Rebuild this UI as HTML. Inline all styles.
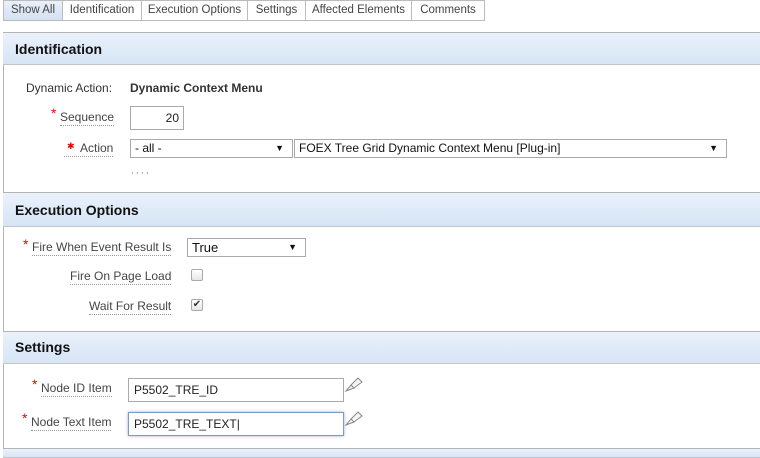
<!DOCTYPE html>
<html><head><style>
*{box-sizing:border-box;margin:0;padding:0}
body{width:760px;height:453px;overflow:hidden;background:#fff;font-family:"Liberation Sans",Arial,sans-serif;font-size:12px;color:#333;position:relative}
.a{position:absolute}
.tab{position:absolute;top:0;height:21px;border:1px solid #bbb;border-left:none;background:#fff;color:#444;font-size:11.5px;line-height:19px;text-align:center}
.hdr{position:absolute;left:3px;width:760px;border-top:1px solid #b5b5b5;border-bottom:1px solid #c5c5c5;background:linear-gradient(#eaf1fb,#d6e5f5);font-weight:bold;font-size:14px;color:#111;padding-left:12px}
.lbl{position:absolute;color:#444;font-size:12px;border-bottom:1px dotted #999;line-height:15px}
.star{position:absolute;color:#e00;font-size:14px}
.inp{position:absolute;border:1px solid #aaa;background:#fff;font-size:12px;color:#222;padding-left:5px}
.sel{position:absolute;border:1px solid #aaa;background:#fff;font-size:12px;color:#111;padding-left:4px;line-height:17px}
.sel:after{content:"▼";position:absolute;right:8px;top:0;font-size:9px}
.cb{position:absolute;width:12px;height:12px;border:1px solid #aaa;border-radius:2px;background:linear-gradient(#fff,#e6e6e6)}
</style></head><body>
<div class="tab" style="left:3px;width:60px;border-left:1px solid #bbb;background:linear-gradient(#e9f0fa,#d3e1f3)">Show All</div>
<div class="tab" style="left:63px;width:79px">Identification</div>
<div class="tab" style="left:142px;width:106px">Execution Options</div>
<div class="tab" style="left:248px;width:58px">Settings</div>
<div class="tab" style="left:306px;width:106px">Affected Elements</div>
<div class="tab" style="left:412px;width:73px">Comments</div>

<div class="a" style="left:3px;top:32px;width:1px;height:421px;background:#b5b5b5"></div>

<div class="hdr" style="top:32px;height:33px;line-height:32px">Identification</div>
<div class="a" style="left:26px;top:81px;color:#333">Dynamic Action:</div>
<div class="a" style="left:130px;top:81px;font-weight:bold;color:#333">Dynamic Context Menu</div>
<span class="star" style="left:51px;top:105px">*</span>
<div class="lbl" style="left:60px;top:110px">Sequence</div>
<div class="inp" style="left:130px;top:106px;width:54px;height:24px;text-align:right;padding-right:4px;line-height:22px">20</div>
<span class="star" style="left:67px;top:141px;font-size:9px">✱</span>
<div class="lbl" style="left:64px;top:141px;padding-left:16px">Action</div>
<div class="sel" style="left:130px;top:139px;width:163px;height:19px">- all -</div>
<div class="sel" style="left:294px;top:139px;width:433px;height:19px">FOEX Tree Grid Dynamic Context Menu [Plug-in]</div>
<div class="a" style="left:131px;top:165px;font-size:9px;color:#888">, , , ,</div>

<div class="hdr" style="top:192px;height:35px;line-height:34px">Execution Options</div>
<span class="star" style="left:23px;top:236px">*</span>
<div class="lbl" style="left:32px;top:240px">Fire When Event Result Is</div>
<div class="sel" style="left:187px;top:238px;width:119px;height:19px;font-size:13px">True</div>
<div class="lbl" style="left:70px;top:269px">Fire On Page Load</div>
<div class="cb" style="left:191px;top:269px"></div>
<div class="lbl" style="left:89px;top:299px">Wait For Result</div>
<div class="cb" style="left:191px;top:299px;font-size:10px;line-height:9px;text-align:center;color:#333">✔</div>

<div class="hdr" style="top:331px;height:33px;line-height:31px">Settings</div>
<span class="star" style="left:32px;top:376px">*</span>
<div class="lbl" style="left:41px;top:381px">Node ID Item</div>
<div class="inp" style="left:128px;top:378px;width:216px;height:24px;line-height:22px">P5502_TRE_ID</div>
<span class="star" style="left:22px;top:410px">*</span>
<div class="lbl" style="left:31px;top:415px">Node Text Item</div>
<div class="inp" style="left:128px;top:412px;width:216px;height:24px;line-height:22px;border-color:#7a9cc7;box-shadow:0 0 3px #aac">P5502_TRE_TEXT|</div>
<svg class="a" style="left:344px;top:376px" width="20" height="20" viewBox="0 0 20 20"><path d="M2 15 L7 9 L10 12 Z M7 9 L14 2 L18 6 L10 12" fill="#f4f4f4" stroke="#888" stroke-width="1"/></svg>
<svg class="a" style="left:344px;top:410px" width="20" height="20" viewBox="0 0 20 20"><path d="M2 15 L7 9 L10 12 Z M7 9 L14 2 L18 6 L10 12" fill="#f4f4f4" stroke="#888" stroke-width="1"/></svg>

<div class="hdr" style="top:448px;height:10px"></div>
</body></html>
